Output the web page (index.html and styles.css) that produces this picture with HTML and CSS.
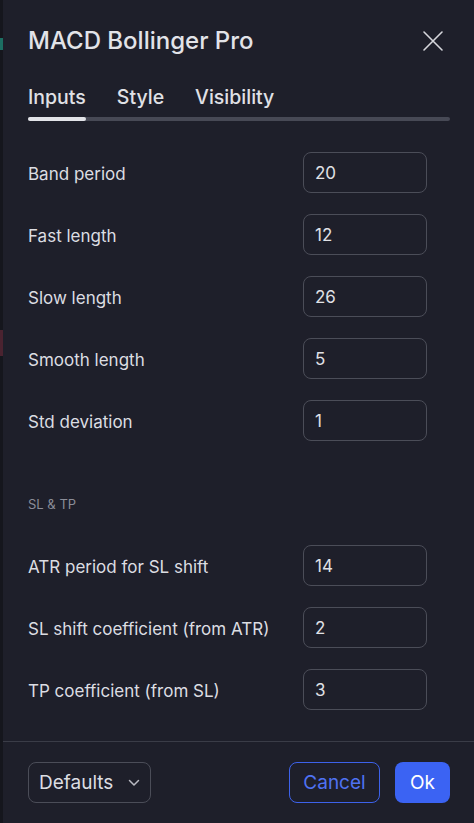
FILE: index.html
```html
<!DOCTYPE html>
<html>
<head>
<meta charset="utf-8">
<link rel="stylesheet" href="styles.css">
</head>
<body>
<div class="strip">
  <div class="strip-gap-a"></div>
  <div class="strip-green"></div>
  <div class="strip-gap-b"></div>
  <div class="strip-red"></div>
</div>
<div class="dialog">
  <div class="header">
    <div class="title">MACD Bollinger Pro</div>
    <svg class="close" width="22" height="22" viewBox="0 0 22 22"><path d="M2 2 L20 20 M20 2 L2 20" stroke="#d6d7dc" stroke-width="1.6" stroke-linecap="round" fill="none"/></svg>
  </div>
  <div class="tabs">
    <div class="tab">Inputs</div>
    <div class="tab">Style</div>
    <div class="tab">Visibility</div>
  </div>
  <div class="tabbar"><div class="tabbar-active"></div></div>
  <div class="content">
    <div class="row"><div class="label">Band period</div><div class="input">20</div></div>
    <div class="row"><div class="label">Fast length</div><div class="input">12</div></div>
    <div class="row"><div class="label">Slow length</div><div class="input">26</div></div>
    <div class="row"><div class="label">Smooth length</div><div class="input">5</div></div>
    <div class="row"><div class="label">Std deviation</div><div class="input">1</div></div>
    <div class="section">SL &amp; TP</div>
    <div class="row"><div class="label">ATR period for SL shift</div><div class="input">14</div></div>
    <div class="row"><div class="label">SL shift coefficient (from ATR)</div><div class="input">2</div></div>
    <div class="row"><div class="label">TP coefficient (from SL)</div><div class="input">3</div></div>
  </div>
  <div class="footer">
    <div class="defaults">Defaults
      <svg class="chev" width="12" height="8" viewBox="0 0 12 8"><path d="M1.5 1.5 L6 6 L10.5 1.5" stroke="#b9bac2" stroke-width="1.5" fill="none" stroke-linecap="round" stroke-linejoin="round"/></svg>
    </div>
    <div class="spacer"></div>
    <div class="btn cancel">Cancel</div>
    <div class="btn ok">Ok</div>
  </div>
</div>
</body>
</html>
```

FILE: styles.css
```css
html, body {
  margin: 0;
  padding: 0;
}
body {
  width: 474px;
  height: 823px;
  display: flex;
  background: #16171f;
  font-family: Inter, "Noto Sans", sans-serif;
  color: #dcdde2;
  overflow: hidden;
}
.strip {
  width: 3px;
  display: flex;
  flex-direction: column;
  background: #15161d;
}
.strip-gap-a { height: 38px; }
.strip-green { height: 12px; background: #1c6e62; }
.strip-gap-b { height: 280px; }
.strip-red { height: 26px; background: #4a2330; }
.dialog {
  flex: 1;
  height: 823px;
  background: #1e1f2a;
  display: flex;
  flex-direction: column;
  padding-left: 25px;
  box-sizing: border-box;
}
.header {
  display: flex;
  align-items: center;
  justify-content: space-between;
  padding-top: 27px;
  padding-right: 30px;
  height: 28px;
}
.title {
  font-size: 24px;
  line-height: 28px;
  font-weight: 500;
  color: #e2e3e8;
}
.close {
  display: block;
}
.tabs {
  display: flex;
  gap: 31px;
  margin-top: 30px;
  height: 24px;
}
.tab {
  font-size: 19.5px;
  line-height: 24px;
  font-weight: 500;
  color: #e0e1e6;
}
.tabbar {
  margin-top: 8px;
  margin-right: 24px;
  height: 4px;
  border-radius: 2px;
  background: #474955;
}
.tabbar-active {
  width: 58px;
  height: 4px;
  border-radius: 2px;
  background: #e2e3e8;
}
.content {
  flex: 1;
  padding-top: 31px;
  display: flex;
  flex-direction: column;
  gap: 21px;
  padding-right: 47px;
}
.row {
  display: flex;
  align-items: center;
  justify-content: space-between;
  height: 41px;
}
.label {
  font-size: 17px;
  padding-top: 2px;
  color: #dcdde2;
}
.input {
  width: 124px;
  height: 41px;
  box-sizing: border-box;
  border: 1.5px solid #4b4d58;
  border-radius: 8px;
  padding-left: 11px;
  font-size: 17px;
  line-height: 40px;
  color: #e0e1e6;
}
.section {
  font-size: 13px;
  line-height: 16px;
  color: #8b8d98;
  margin-top: 34px;
  margin-bottom: 12px;
}
.footer {
  border-top: 1px solid #3a3c47;
  margin-left: -25px;
  padding: 20px 24px 20px 25px;
  display: flex;
  align-items: center;
  gap: 15px;
}
.defaults {
  width: 123px;
  height: 41px;
  box-sizing: border-box;
  border: 1.5px solid #4b4d58;
  border-radius: 8px;
  display: flex;
  align-items: center;
  justify-content: space-between;
  padding: 0 10px 0 10px;
  font-size: 19px;
  color: #dcdde2;
}
.chev { display: block; }
.spacer { flex: 1; }
.btn {
  height: 41px;
  box-sizing: border-box;
  border-radius: 8px;
  display: flex;
  align-items: center;
  justify-content: center;
  font-size: 19px;
}
.cancel {
  width: 91px;
  border: 1.5px solid #3d62ea;
  color: #4f72f2;
}
.ok {
  width: 55px;
  background: #3b63f3;
  color: #ffffff;
}
```
